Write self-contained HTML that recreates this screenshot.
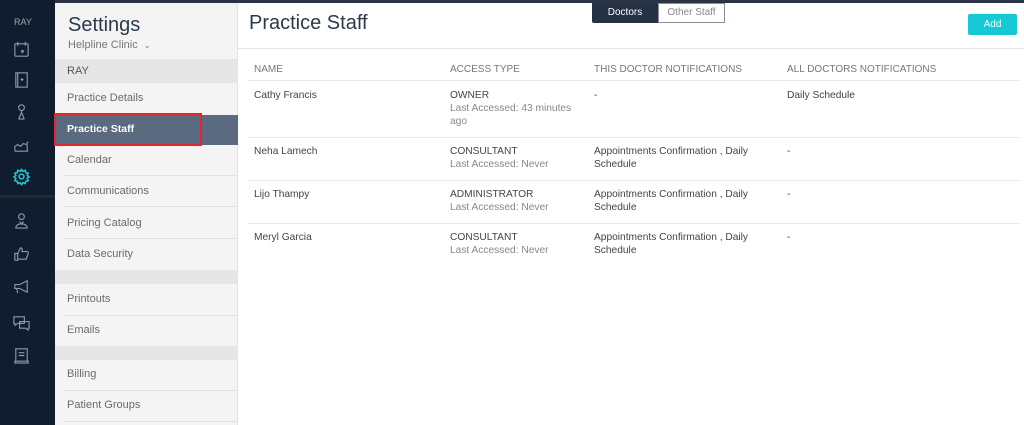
<!DOCTYPE html>
<html><head><meta charset="utf-8"><style>
*{margin:0;padding:0;box-sizing:border-box}
body{width:1024px;height:425px;overflow:hidden;background:#fff;font-family:"Liberation Sans",sans-serif;position:relative;color:#333}
.a{position:absolute}
#top{left:0;top:0;width:1024px;height:3px;background:#2a3444}
#side{left:0;top:0;width:55px;height:425px;background:#111d2e}
#side svg{position:absolute;left:12px;width:19px;height:19px;fill:none;stroke:#8a99ad;stroke-width:1.2}
#panel{left:55px;top:3px;width:183px;height:422px;background:#f4f4f4;border-right:1px solid #e3e3e3}
.band{position:absolute;left:0;width:183px;background:#e6e6e6}
.item{position:absolute;left:12px;font-size:11px;color:#6b6b6b}
.ln{position:absolute;left:8px;width:175px;height:1px;background:#e2e2e2}
.hd{position:absolute;top:64px;font-size:10px;color:#777}
.c{position:absolute;font-size:10.2px;line-height:13px;color:#444}
.g{color:#888}
.rl{position:absolute;left:248px;width:772px;height:1px;background:#e8e8e8}
</style></head><body>
<div class="a" id="top"></div>
<div class="a" id="side">
<div class="a" style="left:14px;top:17px;font-size:9px;color:#9aa6b6">RAY</div>
<svg style="top:40px" viewBox="0 0 20 20"><rect x="3" y="4" width="14" height="13" rx="1"/><path d="M6 2v4M14 2v4"/><circle cx="11" cy="12" r="1"/></svg>
<svg style="top:70px" viewBox="0 0 20 20"><rect x="4" y="3" width="12" height="15"/><path d="M6 3v15M9 10h3M10.5 8.5v3"/></svg>
<svg style="top:102px" viewBox="0 0 20 20"><circle cx="10" cy="6" r="3"/><path d="M10 9v2M7 18l3-7 3 7M7 18h6"/></svg>
<svg style="top:135px" viewBox="0 0 20 20"><path d="M3 17h14M3 17v-5l3-2 3 2 3-3 3 1 2-3M16 10v7"/></svg>
<svg style="top:167px;stroke:#1ec8d0;stroke-width:1.6" viewBox="0 0 20 20"><circle cx="10" cy="10" r="2.5"/><path d="M10 2.5l1.5 2 2.5-1 .5 2.5 2.5.5-1 2.5 2 1.5-2 1.5 1 2.5-2.5.5-.5 2.5-2.5-1-1.5 2-1.5-2-2.5 1-.5-2.5-2.5-.5 1-2.5-2-1.5 2-1.5-1-2.5 2.5-.5.5-2.5 2.5 1z"/></svg>
<div class="a" style="left:0;top:195px;width:55px;height:3px;background:#1f2a3a"></div>
<svg style="top:211px" viewBox="0 0 20 20"><circle cx="10" cy="6" r="3"/><path d="M4 18c0-6 12-6 12 0zM8 11l2 3 2-3"/></svg>
<svg style="top:244px" viewBox="0 0 20 20"><path d="M3 10h3v7H3zM6 10l3-6c2 0 2 2 1.5 4H16c1 0 1.5 1 1 2l-2 6H6"/></svg>
<svg style="top:277px" viewBox="0 0 20 20"><path d="M3 8h5l8-4v12l-8-4H3zM5 12l1 5"/></svg>
<svg style="top:313px" viewBox="0 0 20 20"><path d="M2 4h11v7H6l-3 2v-2H2zM8 9h10v7h-1v2l-3-2H8z"/></svg>
<svg style="top:346px" viewBox="0 0 20 20"><path d="M4 3h12v13H4zM7 7h6M7 10h6M3 16h14v2H3z"/></svg>
</div>
<div class="a" id="panel">
<div class="a" style="left:13px;top:11px;font-size:20px;color:#2b3a4a">Settings</div>
<div class="a" style="left:13px;top:36px;font-size:11px;color:#777">Helpline Clinic &nbsp;<span style="font-size:8px">&#8964;</span></div>
<div class="band" style="top:56px;height:24px"></div>
<div class="item" style="top:62px;color:#555">RAY</div>
<div class="item" style="top:89px">Practice Details</div>
<div class="a" style="left:0;top:112px;width:183px;height:30px;background:#5a6a80"></div>
<div class="a" style="left:-1px;top:110px;width:148px;height:33px;border:2px solid #e0262e"></div>
<div class="item" style="top:120px;color:#fff;font-weight:bold;font-size:10.5px">Practice Staff</div>
<div class="item" style="top:151px">Calendar</div>
<div class="ln" style="top:172px"></div>
<div class="item" style="top:182px">Communications</div>
<div class="ln" style="top:203px"></div>
<div class="item" style="top:214px">Pricing Catalog</div>
<div class="ln" style="top:235px"></div>
<div class="item" style="top:245px">Data Security</div>
<div class="band" style="top:267px;height:14px"></div>
<div class="item" style="top:290px">Printouts</div>
<div class="ln" style="top:312px"></div>
<div class="item" style="top:321px">Emails</div>
<div class="band" style="top:343px;height:14px"></div>
<div class="item" style="top:365px">Billing</div>
<div class="ln" style="top:387px"></div>
<div class="item" style="top:396px">Patient Groups</div>
<div class="ln" style="top:418px"></div>
</div>
<div class="a" style="left:249px;top:12px;font-size:20px;color:#2b3a4a">Practice Staff</div>
<div class="a" style="left:592px;top:3px;width:66px;height:20px;background:#253246;color:#fff;font-size:10px;text-align:center;line-height:19px;border-radius:0 0 0 2px">Doctors</div>
<div class="a" style="left:658px;top:3px;width:67px;height:20px;border:1px solid #8a8f99;background:#fff;color:#888;font-size:10px;text-align:center;line-height:18px">Other Staff</div>
<div class="a" style="left:968px;top:14px;width:49px;height:21px;background:#14c9d3;color:#fff;font-size:10px;text-align:center;line-height:21px;border-radius:2px">Add</div>
<div class="a" style="left:238px;top:48px;width:786px;height:1px;background:#e6e6e6"></div>
<div class="hd" style="left:254px">NAME</div>
<div class="hd" style="left:450px">ACCESS TYPE</div>
<div class="hd" style="left:594px">THIS DOCTOR NOTIFICATIONS</div>
<div class="hd" style="left:787px">ALL DOCTORS NOTIFICATIONS</div>
<div class="rl" style="top:80px"></div>
<div class="c" style="left:254px;top:89px">Cathy Francis</div>
<div class="c" style="left:450px;top:89px">OWNER<br><span class="g">Last Accessed: 43 minutes<br>ago</span></div>
<div class="c" style="left:594px;top:89px">-</div>
<div class="c" style="left:787px;top:89px">Daily Schedule</div>
<div class="rl" style="top:137px"></div>
<div class="c" style="left:254px;top:145px">Neha Lamech</div>
<div class="c" style="left:450px;top:145px">CONSULTANT<br><span class="g">Last Accessed: Never</span></div>
<div class="c" style="left:594px;top:145px">Appointments Confirmation , Daily<br>Schedule</div>
<div class="c" style="left:787px;top:145px">-</div>
<div class="rl" style="top:180px"></div>
<div class="c" style="left:254px;top:188px">Lijo Thampy</div>
<div class="c" style="left:450px;top:188px">ADMINISTRATOR<br><span class="g">Last Accessed: Never</span></div>
<div class="c" style="left:594px;top:188px">Appointments Confirmation , Daily<br>Schedule</div>
<div class="c" style="left:787px;top:188px">-</div>
<div class="rl" style="top:223px"></div>
<div class="c" style="left:254px;top:231px">Meryl Garcia</div>
<div class="c" style="left:450px;top:231px">CONSULTANT<br><span class="g">Last Accessed: Never</span></div>
<div class="c" style="left:594px;top:231px">Appointments Confirmation , Daily<br>Schedule</div>
<div class="c" style="left:787px;top:231px">-</div>
</body></html>
